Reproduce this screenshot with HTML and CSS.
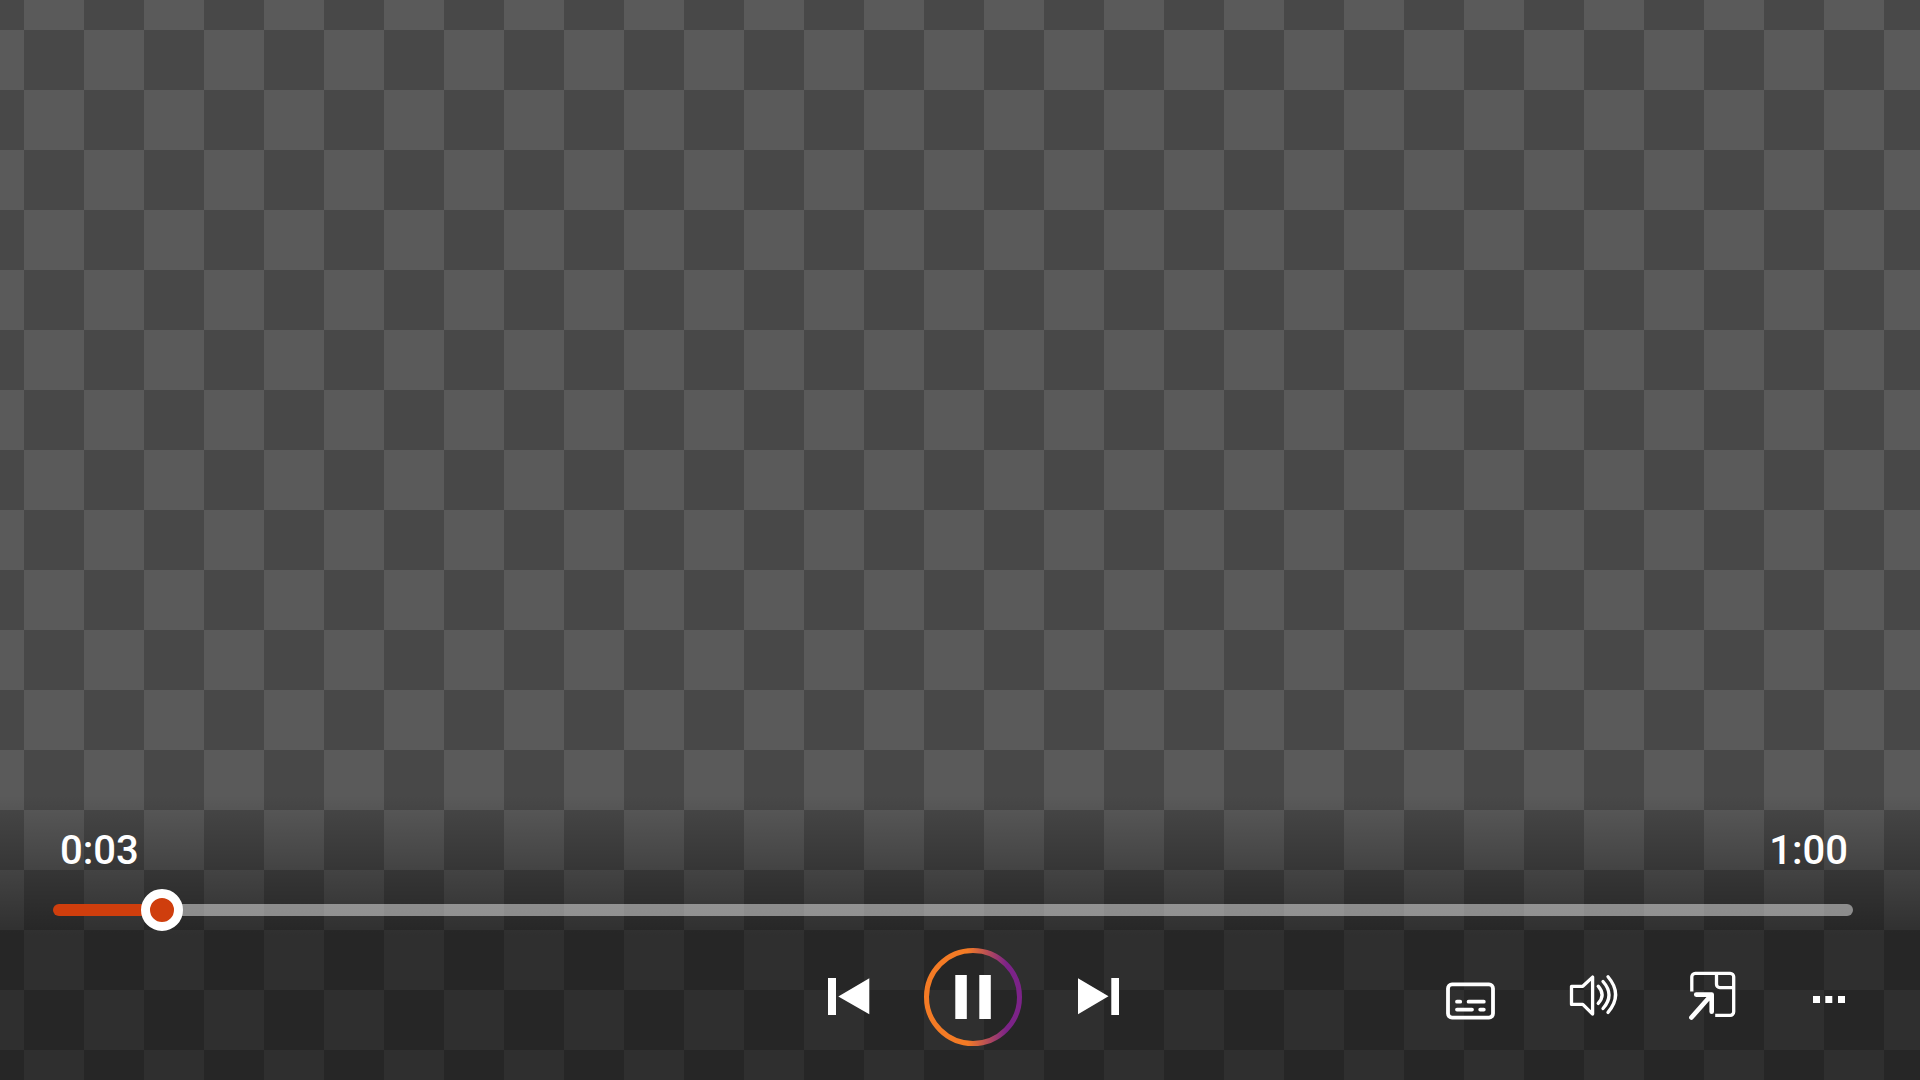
FILE: index.html
```html
<!DOCTYPE html>
<html lang="en">
<head>
    <meta charset="UTF-8">
    <meta name="viewport" content="width=device-width, initial-scale=1.0">
    <title>Video Player</title>
    <link rel="stylesheet" href="styles.css">
</head>
<body>
    <main class="player">
        <div class="controls">
            <div class="times">
                <span id="current">0:03</span>
                <span>1:00</span>
            </div>

            <input type="range" class="seek" id="seek" min="0" max="60" value="3" aria-label="Seek" style="--progress: 5%">

            <div class="buttons">
                <div class="playback">
                    <button class="btn" aria-label="Previous">
                        <svg viewBox="0 0 74 74">
                            <path class="solid" d="M17 18h8v37h-8zM27.3 36.6L58.3 18.3v36z"/>
                        </svg>
                    </button>
                    <button class="btn btn-pause" aria-label="Pause">
                        <svg viewBox="0 0 98 98">
                            <defs>
                                <linearGradient id="ring" x1="0" y1="0" x2="1" y2="0">
                                    <stop offset="0.44" stop-color="#f47b25"/>
                                    <stop offset="0.86" stop-color="#7c2388"/>
                                </linearGradient>
                            </defs>
                            <circle cx="49" cy="49" r="46.5" fill="none" stroke="url(#ring)" stroke-width="5"/>
                            <path class="solid" d="M31.3 27h11.5v44H31.3zM55.3 27h11.5v44H55.3z"/>
                        </svg>
                    </button>
                    <button class="btn" aria-label="Next">
                        <svg viewBox="0 0 74 74">
                            <path class="solid" d="M17 18.3v36l30.5-18zM50.3 18H58v37h-7.7z"/>
                        </svg>
                    </button>
                </div>

                <div class="options">
                    <button class="btn" aria-label="Subtitles">
                        <svg viewBox="0 0 74 74">
                            <rect class="line" x="16" y="24.4" width="45" height="33.2" rx="4" stroke-width="3.8"/>
                            <path class="line" stroke-width="3.8" d="M25 41.7h3.2M36.6 41.7h15.2M25 49.6h15M48.2 49.6h3.6"/>
                        </svg>
                    </button>
                    <button class="btn" aria-label="Volume">
                        <svg viewBox="0 0 74 74">
                            <path class="line" stroke-width="3.3" d="M19.5 26.3h11.3l9.8-9.2v37l-9.8-9.7H19.5z"/>
                            <path class="line" stroke-width="3.3" d="M46.2 26.2q7.8 8.9 0 17.2M51 21.5q12 13.5 0 27M56 16.8q15.2 17.8 0 35.6"/>
                        </svg>
                    </button>
                    <button class="btn" aria-label="Picture in picture">
                        <svg viewBox="0 0 74 74">
                            <path class="line cut" stroke-width="3.3" d="M19.8 31.5V16.8a3.5 3.5 0 0 1 3.5-3.5h34.9a3.5 3.5 0 0 1 3.5 3.5v35a3.5 3.5 0 0 1-3.5 3.5H43.2M44.5 13.3v11a3.3 3.3 0 0 0 3.3 3.3h13.9"/>
                            <path class="line" stroke-width="4.6" d="M24.2 34.6h15.5v17.2M39.3 35L19.4 57.6"/>
                        </svg>
                    </button>
                    <button class="btn" aria-label="More">
                        <svg viewBox="0 0 74 74">
                            <path class="solid" d="M21 36h7v7h-7zM33.3 36h7v7h-7zM46 36h7v7h-7z"/>
                        </svg>
                    </button>
                </div>
            </div>
        </div>
    </main>

    <script>
        const seek = document.getElementById("seek");
        seek.addEventListener("input", function () {
            seek.style.setProperty("--progress", (seek.value / seek.max) * 100 + "%");
            const minutes = Math.floor(seek.value / 60);
            const seconds = String(seek.value % 60).padStart(2, "0");
            document.getElementById("current").textContent = minutes + ":" + seconds;
        });
    </script>
</body>
</html>
```
FILE: styles.css
```css
body {
    margin: 0;
    font-family: Roboto, Arial, sans-serif;
    color: white;
}
.player {
    display: flex;
    flex-direction: column;
    justify-content: flex-end;
    min-height: 100vh;
    background: conic-gradient(#5a5a5a 25%, #484848 0 50%, #5a5a5a 0 75%, #484848 0) 24px 30px / 120px 120px;
}
.controls {
    padding: 32px 0 34px;
    background: linear-gradient(rgba(0, 0, 0, 0), rgba(0, 0, 0, 0.48) 140px);
}
.times {
    display: flex;
    justify-content: space-between;
    padding: 0 72px 0 60px;
    font-size: 40px;
    font-weight: 500;
    line-height: 48px;
}

/* seek bar */
.seek {
    -webkit-appearance: none;
    appearance: none;
    display: block;
    width: calc(100% - 120px);
    height: 42px;
    margin: 14px 67px 17px 53px;
    background: none;
    cursor: pointer;
}
.seek::-webkit-slider-runnable-track {
    height: 12px;
    border-radius: 6px;
    background: linear-gradient(to right, #cf3e0d var(--progress), rgba(255, 255, 255, 0.46) 0);
}
.seek::-webkit-slider-thumb {
    -webkit-appearance: none;
    box-sizing: border-box;
    width: 42px;
    height: 42px;
    margin-top: -15px;
    border: 9px solid white;
    border-radius: 50%;
    background: #cf3e0d;
}

/* buttons */
.buttons {
    display: grid;
    grid-template-columns: 1fr auto 1fr;
    align-items: center;
    padding: 0 54px 0 80px;
}
.playback {
    grid-column: 2;
    display: flex;
    align-items: center;
    gap: 39px;
}
.options {
    grid-column: 3;
    justify-self: end;
    display: flex;
    gap: 46px;
}
.btn {
    width: 74px;
    height: 74px;
    padding: 0;
    border: none;
    background: none;
    cursor: pointer;
}
.btn-pause {
    width: 98px;
    height: 98px;
}
.btn svg {
    display: block;
    width: 100%;
    height: 100%;
}
.solid {
    fill: white;
}
.line {
    fill: none;
    stroke: white;
    stroke-linecap: round;
    stroke-linejoin: round;
}
.cut {
    stroke-linecap: butt;
}
```
